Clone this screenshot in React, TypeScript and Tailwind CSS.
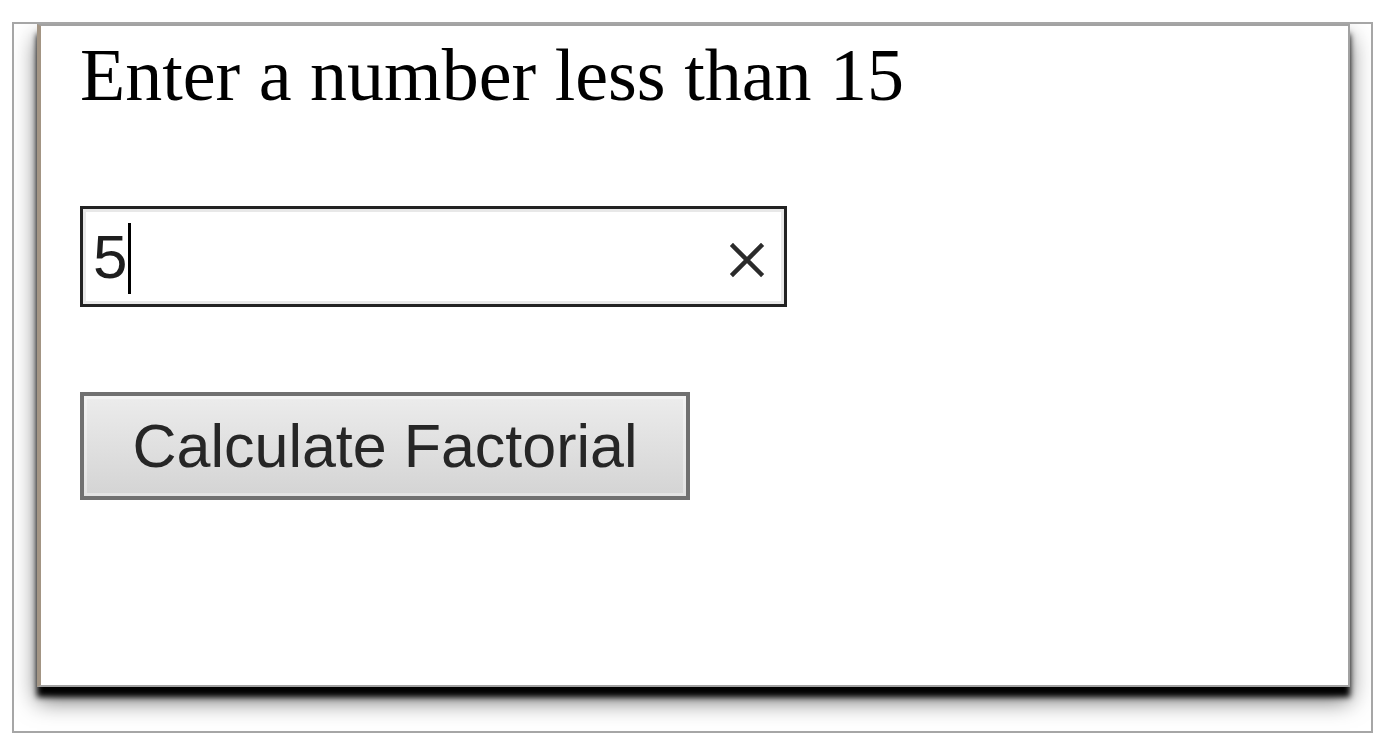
import React from "react";

function ClearIcon() {
  return (
    <svg width="36" height="36" viewBox="0 0 36 36" aria-hidden="true">
      <path d="M4 4 L32 32 M32 4 L4 32" stroke="#2b2b2b" strokeWidth="4.5" strokeLinecap="square" />
    </svg>
  );
}

export default function App() {
  return (
    <div className="min-h-screen bg-white pl-[12px] pt-[22px]">
      {/* outer frame of the screenshot */}
      <div className="h-[711px] w-[1361px] overflow-hidden border-2 border-[#a6a6a6] bg-white pl-[23px]">
        <div className="h-[663px] w-[1313px] border-2 border-l-4 border-[#a2a2a2] border-l-[#a39584] bg-white pl-[39px] pt-[12px] shadow-[0_10px_6px_#000,0_14px_22px_rgba(0,0,0,0.55)]">
          <h1 className="font-['Liberation_Serif',serif] text-[74px] leading-[74px] text-black">
            Enter a number less than 15
          </h1>

          <div className="mt-[94px] h-[101px] w-[707px] border-[3px] border-[#222]">
            <div className="flex h-full items-center border-[3px] border-[#e8e8e8] bg-white pl-[7px] pr-[16px]">
              <span className="font-['Liberation_Sans',Arial,sans-serif] text-[62px] leading-none text-[#1e1e1e]">5</span>
              <span className="ml-[1px] mt-[4px] h-[71px] w-[3px] bg-black" />
              <span className="ml-auto mt-[6px] flex">
                <ClearIcon />
              </span>
            </div>
          </div>

          <button
            type="button"
            className="mt-[85px] flex h-[108px] w-[610px] items-center justify-center border-4 border-[#707070] bg-gradient-to-b from-[#ececec] to-[#d4d4d4] font-['Liberation_Sans',Arial,sans-serif] text-[61px] leading-none text-[#262626] shadow-[inset_0_0_0_3px_rgba(255,255,255,0.35)]"
          >
            Calculate Factorial
          </button>
        </div>
      </div>
    </div>
  );
}
